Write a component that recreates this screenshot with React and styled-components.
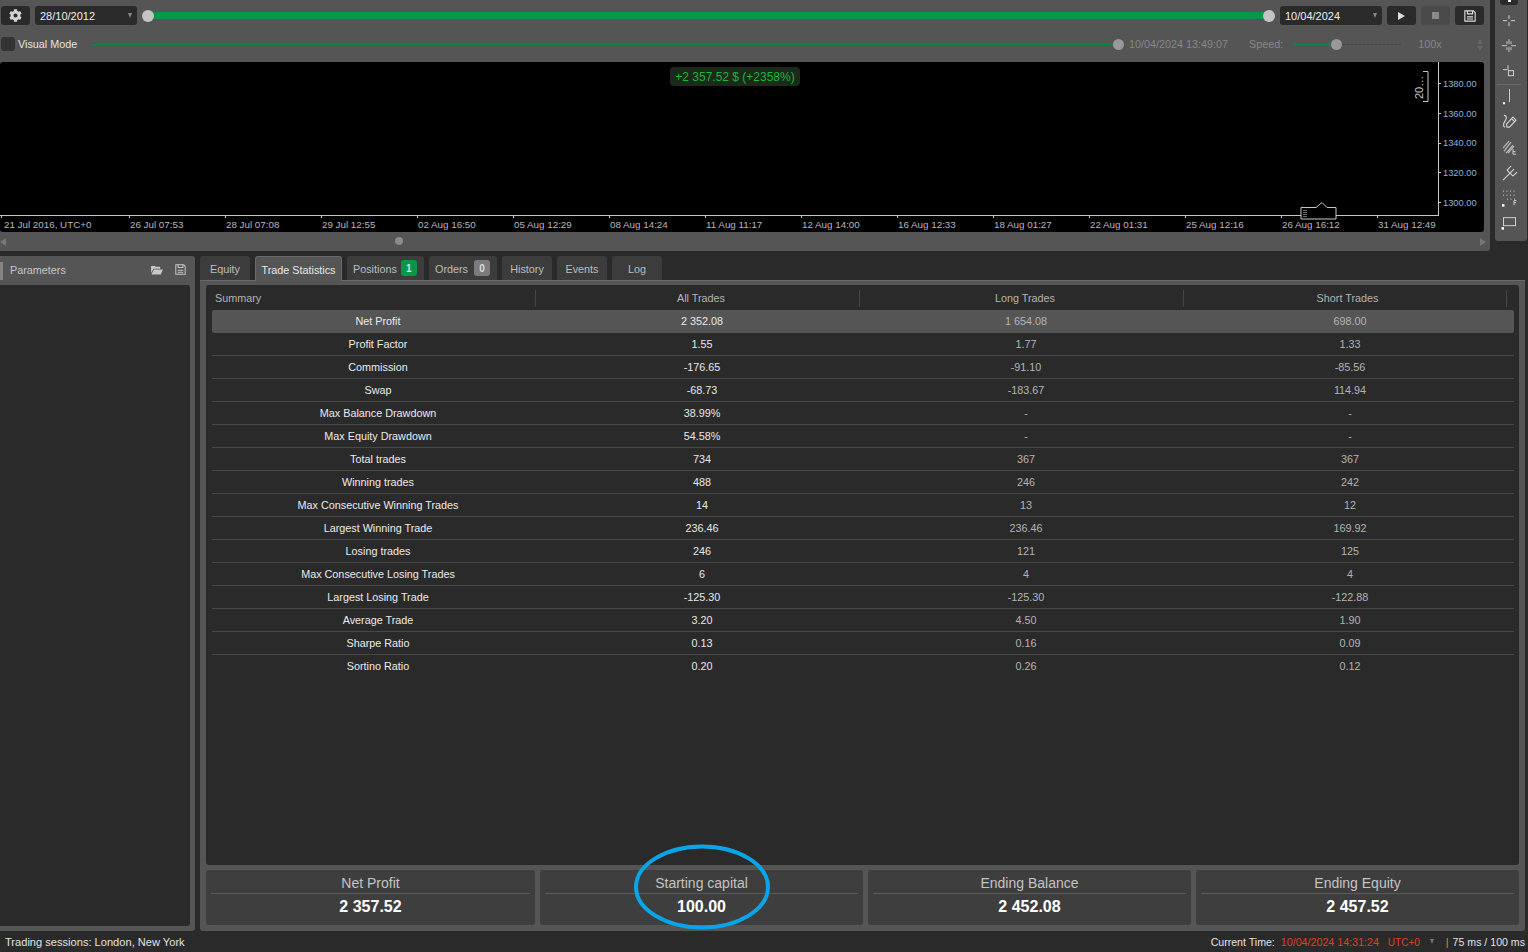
import React from 'react'
import styled, { createGlobalStyle } from 'styled-components'
import { FaCog } from 'react-icons/fa'

const GlobalStyle = createGlobalStyle`
  html, body { margin: 0; padding: 0; background: #2a2a2a; }
  * { box-sizing: border-box; }
  body { font-family: "Liberation Sans", Arial, sans-serif; font-size: 11px; color: #ddd; }
`

const STATS = [
  ['Net Profit', '2 352.08', '1 654.08', '698.00'],
  ['Profit Factor', '1.55', '1.77', '1.33'],
  ['Commission', '-176.65', '-91.10', '-85.56'],
  ['Swap', '-68.73', '-183.67', '114.94'],
  ['Max Balance Drawdown', '38.99%', '-', '-'],
  ['Max Equity Drawdown', '54.58%', '-', '-'],
  ['Total trades', '734', '367', '367'],
  ['Winning trades', '488', '246', '242'],
  ['Max Consecutive Winning Trades', '14', '13', '12'],
  ['Largest Winning Trade', '236.46', '236.46', '169.92'],
  ['Losing trades', '246', '121', '125'],
  ['Max Consecutive Losing Trades', '6', '4', '4'],
  ['Largest Losing Trade', '-125.30', '-125.30', '-122.88'],
  ['Average Trade', '3.20', '4.50', '1.90'],
  ['Sharpe Ratio', '0.13', '0.16', '0.09'],
  ['Sortino Ratio', '0.20', '0.26', '0.12'],
]

const TIMES = ['26 Jul 07:53', '28 Jul 07:08', '29 Jul 12:55', '02 Aug 16:50', '05 Aug 12:29', '08 Aug 14:24', '11 Aug 11:17', '12 Aug 14:00', '16 Aug 12:33', '18 Aug 01:27', '22 Aug 01:31', '25 Aug 12:16', '26 Aug 16:12', '31 Aug 12:49']
const PRICES = ['1380.00', '1360.00', '1340.00', '1320.00', '1300.00']

const Page = styled.div`
  width: 1528px;
  height: 952px;
  overflow: hidden;
  position: relative;
  display: flex;
  flex-direction: column;
  background: #2a2a2a;
`
const TopArea = styled.div`
  display: flex;
  align-items: flex-start;
  height: 256px;
`
const Backtest = styled.div`
  width: 1490px;
  height: 251px;
  background: #555;
  border-radius: 0 0 3px 0;
  display: flex;
  flex-direction: column;
`
const ControlRow = styled.div`
  height: 31px;
  padding: 6px 6px 0 1px;
  display: flex;
  align-items: flex-start;
`
const IconBtn = styled.button`
  width: 29px;
  height: 19px;
  padding: 0;
  margin-left: ${p => p.$gap ?? 5}px;
  border: 0;
  border-radius: 3px;
  background: ${p => (p.$off ? '#4a4a4a' : '#2a2a2a')};
  color: ${p => (p.$off ? '#8a8a8a' : '#ddd')};
  display: flex;
  align-items: center;
  justify-content: center;
  flex: none;
`
const DateBox = styled.div`
  width: 102px;
  height: 19px;
  margin-left: ${p => p.$gap}px;
  padding: 0 5px;
  border-radius: 3px;
  background: #2a2a2a;
  color: #eee;
  font-size: 11px;
  display: flex;
  align-items: center;
  justify-content: space-between;
  flex: none;
`
const Caret = styled.span`
  width: 0;
  height: 0;
  margin-left: ${p => p.$gap || 0}px;
  border-left: 2.5px solid transparent;
  border-right: 2.5px solid transparent;
  border-top: 5px solid ${p => p.$color || '#888'};
`
const RangeTrack = styled.div`
  flex: 1;
  height: 7px;
  margin: 6px 6px 0 11px;
  background: #069748;
  position: relative;
`
const Thumb = styled.span`
  position: absolute;
  top: 50%;
  width: ${p => p.$size || 12}px;
  height: ${p => p.$size || 12}px;
  margin-top: ${p => -(p.$size || 12) / 2}px;
  border-radius: 50%;
  background: ${p => p.$color || '#c4c4c4'};
  ${p => (p.$right ? 'right: -6px;' : p.$left ? `left: ${p.$left}px;` : 'left: -6px;')}
`
const VisualRow = styled.div`
  height: 31px;
  padding: 6px 6px 0 1px;
  display: flex;
  align-items: flex-start;
`
const Check = styled.span`
  width: 14px;
  height: 14px;
  border-radius: 3px;
  background: #333;
  flex: none;
`
const VisualLabel = styled.span`
  margin-left: 3px;
  width: 74px;
  flex: none;
  line-height: 14px;
  color: #e4e4e4;
  font-size: 10.8px;
`
const ThinTrack = styled.div`
  width: 1026px;
  height: 1px;
  margin-top: 7px;
  background: #0a8a45;
  position: relative;
  flex: none;
`
const Muted = styled.span`
  color: #878787;
  line-height: 14px;
  font-size: 10.8px;
  margin-left: ${p => p.$gap}px;
  flex: none;
`
const SpeedTrack = styled.div`
  width: 108px;
  height: 1px;
  margin: 7px 0 0 11px;
  position: relative;
  flex: none;
  background: repeating-linear-gradient(90deg, #444 0 3px, transparent 3px 4px);
`
const SpeedFill = styled.span`
  display: block;
  width: 42px;
  height: 1px;
  background: repeating-linear-gradient(90deg, #0a8a45 0 3px, transparent 3px 4px);
`
const Spinner = styled.div`
  margin: 0 0 0 35px;
  display: flex;
  flex-direction: column;
  gap: 2px;
  padding-top: 2px;
`
const SpinUp = styled.span`
  width: 0;
  height: 0;
  border-left: 3px solid transparent;
  border-right: 3px solid transparent;
  border-bottom: 5px solid #666;
`
const SpinDown = styled(SpinUp)`
  border-bottom: 0;
  border-top: 5px solid #666;
`
const Chart = styled.div`
  width: 1484px;
  height: 170px;
  flex: none;
  background: #000;
  border-radius: 3px;
  position: relative;
  display: grid;
  grid-template-columns: 1439px 45px;
  grid-template-rows: 154px 16px;
  overflow: hidden;
`
const Plot = styled.div`
  grid-column: 1;
  grid-row: 1;
  border-right: 1px solid #c8c8c8;
  border-bottom: 1px solid #c8c8c8;
`
const PriceAxis = styled.div`
  grid-column: 2;
  grid-row: 1 / 3;
  padding-top: 7px;
  display: flex;
  flex-direction: column;
`
const Price = styled.div`
  height: 29.7px;
  display: flex;
  align-items: center;
  gap: 2px;
  color: #8db4dc;
  font-size: 9.3px;
  &::before {
    content: '';
    width: 2px;
    height: 1px;
    background: #c8c8c8;
  }
`
const TimeAxis = styled.div`
  grid-column: 1;
  grid-row: 2;
  display: flex;
  color: #b9b9b9;
  font-size: 9.8px;
  width: 1439px;
`
const TimeLabel = styled.div`
  width: ${p => p.$w}px;
  flex: none;
  padding: 2px 0 0 ${p => p.$pad}px;
  position: relative;
  white-space: nowrap;
  line-height: 13px;
  &::before {
    content: '';
    position: absolute;
    left: ${p => (p.$first ? 1 : 0)}px;
    top: -1px;
    width: 1px;
    height: 3px;
    background: #c8c8c8;
  }
`
const ResultBadge = styled.div`
  position: absolute;
  left: 670px;
  top: 5px;
  width: 130px;
  height: 19px;
  border-radius: 4px;
  background: #1c2a1c;
  color: #14b834;
  font-size: 12px;
  line-height: 20px;
  text-align: center;
`
const ChartOverlay = styled.svg`
  position: absolute;
  left: ${p => p.$x}px;
  top: ${p => p.$y}px;
`
const Rotated = styled.span`
  position: absolute;
  left: 1408px;
  top: 19px;
  width: 22px;
  height: 14px;
  transform: rotate(-90deg);
  color: #c8c8c8;
  font-size: 11px;
  line-height: 14px;
  text-align: center;
`
const ScrollRow = styled.div`
  flex: 1;
  position: relative;
  padding: 0 4px 0 0;
  display: flex;
  align-items: center;
  justify-content: space-between;
`
const ScrollLeft = styled.span`
  width: 0;
  height: 0;
  border-top: 4px solid transparent;
  border-bottom: 4px solid transparent;
  border-right: 6px solid #777;
`
const ScrollRight = styled.span`
  width: 0;
  height: 0;
  border-top: 4px solid transparent;
  border-bottom: 4px solid transparent;
  border-left: 6px solid #777;
`
const ScrollThumb = styled.span`
  position: absolute;
  left: 395px;
  top: 5px;
  width: 8px;
  height: 8px;
  border-radius: 50%;
  background: #8a8a8a;
`
const ToolBar = styled.div`
  width: 32px;
  height: 241px;
  margin-left: 5px;
  background: #555;
  border-radius: 0 0 3px 3px;
  display: flex;
  flex-direction: column;
  align-items: center;
  position: relative;
  padding: 8px 4px 0 0;
`
const ToolTop = styled.div`
  position: absolute;
  left: 5px;
  top: 0;
  width: 18px;
  height: 5px;
  background: #2a2a2a;
  border-radius: 0 0 3px 3px;
  &::after {
    content: '';
    position: absolute;
    left: 8px;
    top: 0;
    width: 3px;
    height: 2px;
    background: #fff;
  }
`
const ToolIcon = styled.svg`
  width: 20px;
  height: 25.3px;
  flex: none;
  color: #cfcfcf;
`
const ToolDivider = styled.div`
  width: 24px;
  height: 1px;
  margin: 0 0 -1px;
  background: #6c6c6c;
`
const Main = styled.div`
  flex: 1;
  display: flex;
  min-height: 0;
`
const Side = styled.div`
  width: 195px;
  height: 675px;
  background: #555;
  border-radius: 0 3px 3px 0;
  padding: 0 5px 5px 0;
  display: flex;
  flex-direction: column;
  position: relative;
`
const Grip = styled.span`
  position: absolute;
  left: 0;
  top: 6px;
  width: 3px;
  height: 18px;
  background: radial-gradient(circle, #bbb 0.6px, transparent 0.8px) 0 0 / 2px 2px;
`
const SideHead = styled.div`
  height: 29px;
  padding: 0 4px 2px 10px;
  display: flex;
  align-items: center;
  gap: 12px;
  color: #c6c6c6;
  font-size: 10.8px;
`
const SideTitle = styled.span`
  flex: 1;
`
const SideBody = styled.div`
  flex: 1;
  background: #2a2a2a;
  border-radius: 0 3px 3px 0;
`
const Work = styled.div`
  width: 1325px;
  margin-left: 5px;
  display: flex;
  flex-direction: column;
`
const Tabs = styled.div`
  height: 24px;
  display: flex;
  gap: 5px;
`
const Tab = styled.div`
  width: ${p => p.$w}px;
  height: ${p => (p.$active ? 25 : 24)}px;
  border-radius: 3px 3px 0 0;
  background: ${p => (p.$active ? '#555' : '#3c3c3c')};
  border: ${p => (p.$active ? '1px solid #6a6a6a' : '0')};
  border-bottom: 0;
  color: ${p => (p.$active ? '#e8e8e8' : '#bdbdbd')};
  font-size: 10.8px;
  display: flex;
  align-items: center;
  justify-content: ${p => (p.$badge ? 'flex-start' : 'center')};
  gap: ${p => p.$gap || 5}px;
  padding: ${p => (p.$badge ? '1px 0 0 6px' : '1px 0 0')};
  position: relative;
  z-index: 1;
`
const Badge = styled.span`
  width: 16px;
  height: 16px;
  margin-top: -1px;
  border-radius: 3px;
  background: ${p => p.$color};
  color: #ddd;
  font-size: 10px;
  font-weight: bold;
  display: flex;
  align-items: center;
  justify-content: center;
`
const WorkPanel = styled.div`
  flex: 1;
  margin-bottom: 21px;
  background: #555;
  border-top: 1px solid #6a6a6a;
  border-radius: 0 0 3px 3px;
  padding: 4px 6px 6px;
  display: flex;
  flex-direction: column;
  gap: 5px;
`
const TablePane = styled.div`
  height: 580px;
  background: #2a2a2a;
  border-radius: 3px;
  padding: 4px 5px 0 6px;
`
const HeadRow = styled.div`
  height: 21px;
  padding-bottom: 3px;
  display: grid;
  grid-template-columns: 324px 324px 324px 323px;
  color: #b4b4b4;
  font-size: 10.8px;
`
const HeadCell = styled.div`
  display: flex;
  align-items: center;
  justify-content: ${p => (p.$left ? 'flex-start' : 'center')};
  padding-left: ${p => p.$pad}px;
  position: relative;
  &::after {
    content: '';
    position: absolute;
    right: 0;
    top: 1px;
    height: 17px;
    width: 1px;
    background: #454545;
  }
`
const StatRow = styled.div`
  height: 23px;
  padding-left: 4px;
  display: grid;
  grid-template-columns: 324px 324px 324px 324px;
  align-items: center;
  text-align: center;
  font-size: 10.8px;
  border-radius: ${p => (p.$active ? '2px' : '0')};
  background: ${p => (p.$active ? '#555' : 'transparent')};
  border-bottom: 1px solid ${p => (p.$active || p.$last ? 'transparent' : '#474747')};
  width: 1302px;
`
const LabelCell = styled.div`
  color: #eaeaea;
`
const MainCell = styled.div`
  color: #e8e8e8;
`
const SubCell = styled.div`
  color: #b4b4b4;
`
const Cards = styled.div`
  height: 55px;
  display: grid;
  grid-template-columns: 329px 323px 323px 323px;
  gap: 5px;
`
const Card = styled.div`
  background: #3e3e3e;
  border-radius: 3px;
  padding: 5px 5px 0;
  text-align: center;
`
const CardLabel = styled.div`
  height: 19px;
  border-bottom: 1px solid #5a5a5a;
  color: #c4c4c4;
  font-size: 14px;
  line-height: 17px;
`
const CardValue = styled.div`
  color: #fff;
  font-size: 16px;
  font-weight: bold;
  line-height: 25px;
`
const Ring = styled.svg`
  position: absolute;
  left: 633px;
  top: 844px;
`
const Status = styled.div`
  position: absolute;
  left: 0;
  right: 0;
  bottom: 0;
  height: 21px;
  padding: 0 3px 0 5px;
  display: flex;
  align-items: center;
  font-size: 10.6px;
  color: #e2e2e2;
`
const Sessions = styled.span`
  font-size: 11.1px;
`
const Grow = styled.span`
  flex: 1;
`
const Red = styled.span`
  color: #e0401c;
  margin-left: ${p => p.$gap}px;
  margin-top: ${p => p.$drop || 0}px;
  font-size: ${p => p.$size || 10.7}px;
`
const Pipe = styled.span`
  color: #d89040;
  margin: 0 4px 0 12px;
`

const Floppy = ({ size = 14 }) => (
  <svg width={size} height={size} viewBox="0 0 14 14" fill="none" stroke="currentColor" strokeWidth="1.3">
    <path d="M1 1h10l2 2v10H1z" />
    <path d="M4 1v3.5h6V1M3.5 8h7M3.5 10.5h7" />
  </svg>
)

const FolderOpen = () => (
  <svg width="12" height="10" viewBox="0 0 13 11" fill="#c8c8c8">
    <path d="M0 1h4l1 1h5v2H2.5L0 9z" />
    <path d="M3 5h10l-2.4 5.5H0.4z" />
  </svg>
)

function Tool({ children }) {
  return (
    <ToolIcon viewBox="0 0 20 25" fill="none" stroke="currentColor" strokeWidth="1">
      {children}
    </ToolIcon>
  )
}

function Toolbar() {
  return (
    <ToolBar>
      <ToolTop />
      <Tool><path d="M10 7v4M10 14v4M4 12.5h4M12 12.5h4" /></Tool>
      <Tool><path d="M10 6v5M10 14v5M3 12.5h5M12 12.5h5M8 8v3M12 8v3M8 14v3M12 14v3" opacity=".9" /></Tool>
      <Tool><path d="M9 6v5M4 10.5h4" /><rect x="9.5" y="11.5" width="5" height="5" /></Tool>
      <ToolDivider />
      <Tool>
        <path d="M10.5 5v13" />
        <path d="M4 18h2v2H4z" fill="#fff" stroke="none" />
      </Tool>
      <Tool>
        <path d="M5 6c3 1 3 3 1 6s-2 5 0 6" strokeWidth="1.2" />
        <path d="M8 18l-.5-3 6.5-7 3 3-6.5 7zM12.5 9.5l3 3" strokeWidth="1.2" />
      </Tool>
      <Tool>
        <path d="M4 14l6-7M5 17l7-9M7 19l7-8M9 19l6-7" strokeWidth="1.3" opacity=".8" />
        <path d="M14 15v5h3M14 17.5h2.5" />
      </Tool>
      <Tool>
        <path d="M4 20l7-7M8 10l6 6M8 10l4-4M11 13l4-4M14 16l4-4" strokeWidth="1.2" />
      </Tool>
      <Tool>
        <path d="M4 6h12M4 10h12M8 14h8" strokeDasharray="1 2.5" />
        <path d="M15 15.5v4.5M15 15.5h2.5M15 17.5h2" />
        <path d="M3 19h2.5v2.5H3z" fill="#fff" stroke="none" />
      </Tool>
      <Tool>
        <rect x="4.5" y="7.5" width="12" height="8" />
        <path d="M2.5 17h2.5v2.5H2.5z" fill="#fff" stroke="none" />
      </Tool>
    </ToolBar>
  )
}

function ChartPanel() {
  return (
    <Chart>
      <Plot />
      <PriceAxis>
        {PRICES.map(p => <Price key={p}>{p}</Price>)}
      </PriceAxis>
      <TimeAxis>
        <TimeLabel $w={129} $pad={4} $first>21 Jul 2016, UTC+0</TimeLabel>
        {TIMES.map(t => (
          <TimeLabel key={t} $w={96} $pad={1}>{t}</TimeLabel>
        ))}
      </TimeAxis>
      <ResultBadge>+2 357.52 $ (+2358%)</ResultBadge>
      <Rotated>20…</Rotated>
      <ChartOverlay $x={1422} $y={9} width="7" height="32" viewBox="0 0 7 32" fill="none" stroke="#c8c8c8">
        <path d="M1 .5h5v30H1" />
      </ChartOverlay>
      <ChartOverlay $x={1299} $y={139} width="40" height="20" viewBox="0 0 40 20" fill="#000" stroke="#c8c8c8">
        <path d="M2 6.5h15l6-5 5 5h9V18H2z" />
        <path d="M5 9v7M7 9v7" stroke="#ddd" strokeDasharray="1 1" />
      </ChartOverlay>
    </Chart>
  )
}

export default function App() {
  return (
    <>
      <GlobalStyle />
      <Page>
        <TopArea>
          <Backtest>
            <ControlRow>
              <IconBtn $gap={0}><FaCog size={13} color="#d4d4d4" /></IconBtn>
              <DateBox $gap={5}>28/10/2012<Caret /></DateBox>
              <RangeTrack>
                <Thumb />
                <Thumb $right />
              </RangeTrack>
              <DateBox $gap={5}>10/04/2024<Caret /></DateBox>
              <IconBtn>
                <svg width="9" height="10" viewBox="0 0 9 10"><path d="M1 1l7 4-7 4z" fill="#ddd" /></svg>
              </IconBtn>
              <IconBtn $off>
                <svg width="7" height="7"><rect width="7" height="7" fill="#8a8a8a" /></svg>
              </IconBtn>
              <IconBtn><Floppy size={12} /></IconBtn>
            </ControlRow>
            <VisualRow>
              <Check />
              <VisualLabel>Visual Mode</VisualLabel>
              <ThinTrack>
                <Thumb $color="#999" $right $size={11} />
              </ThinTrack>
              <Muted $gap={11}>10/04/2024 13:49:07</Muted>
              <Muted $gap={21}>Speed:</Muted>
              <SpeedTrack>
                <SpeedFill />
                <Thumb $color="#999" $left={37} $size={11} />
              </SpeedTrack>
              <Muted $gap={16}>100x</Muted>
              <Spinner><SpinUp /><SpinDown /></Spinner>
            </VisualRow>
            <ChartPanel />
            <ScrollRow>
              <ScrollLeft />
              <ScrollThumb />
              <ScrollRight />
            </ScrollRow>
          </Backtest>
          <Toolbar />
        </TopArea>
        <Main>
          <Side>
            <Grip />
            <SideHead>
              <SideTitle>Parameters</SideTitle>
              <FolderOpen />
              <Floppy size={11} />
            </SideHead>
            <SideBody />
          </Side>
          <Work>
            <Tabs>
              <Tab $w={50}>Equity</Tab>
              <Tab $w={87} $active>Trade Statistics</Tab>
              <Tab $w={77} $badge $gap={4}>Positions<Badge $color="#069748">1</Badge></Tab>
              <Tab $w={68} $badge $gap={6}>Orders<Badge $color="#7c7c7c">0</Badge></Tab>
              <Tab $w={50}>History</Tab>
              <Tab $w={50}>Events</Tab>
              <Tab $w={50}>Log</Tab>
            </Tabs>
            <WorkPanel>
              <TablePane>
                <HeadRow>
                  <HeadCell $left $pad={3}>Summary</HeadCell>
                  <HeadCell $pad={6}>All Trades</HeadCell>
                  <HeadCell $pad={6}>Long Trades</HeadCell>
                  <HeadCell $pad={4}>Short Trades</HeadCell>
                </HeadRow>
                {STATS.map((row, i) => (
                  <StatRow key={row[0]} $active={i === 0} $last={i === STATS.length - 1}>
                    <LabelCell>{row[0]}</LabelCell>
                    <MainCell>{row[1]}</MainCell>
                    <SubCell>{row[2]}</SubCell>
                    <SubCell>{row[3]}</SubCell>
                  </StatRow>
                ))}
              </TablePane>
              <Cards>
                <Card><CardLabel>Net Profit</CardLabel><CardValue>2 357.52</CardValue></Card>
                <Card><CardLabel>Starting capital</CardLabel><CardValue>100.00</CardValue></Card>
                <Card><CardLabel>Ending Balance</CardLabel><CardValue>2 452.08</CardValue></Card>
                <Card><CardLabel>Ending Equity</CardLabel><CardValue>2 457.52</CardValue></Card>
              </Cards>
            </WorkPanel>
          </Work>
        </Main>
        <Status>
          <Sessions>Trading sessions: London, New York</Sessions>
          <Grow />
          Current Time:
          <Red $gap={6}>10/04/2024 14:31:24</Red>
          <Red $gap={9} $size={10} $drop={2}>UTC+0</Red>
          <Caret $color="#777" $gap={10} />
          <Pipe>|</Pipe>
          75 ms / 100 ms
        </Status>
        <Ring width="138" height="86" viewBox="0 0 138 86" fill="none">
          <ellipse cx="69" cy="43" rx="66" ry="40.5" stroke="#0aa5e8" strokeWidth="4" />
        </Ring>
      </Page>
    </>
  )
}
